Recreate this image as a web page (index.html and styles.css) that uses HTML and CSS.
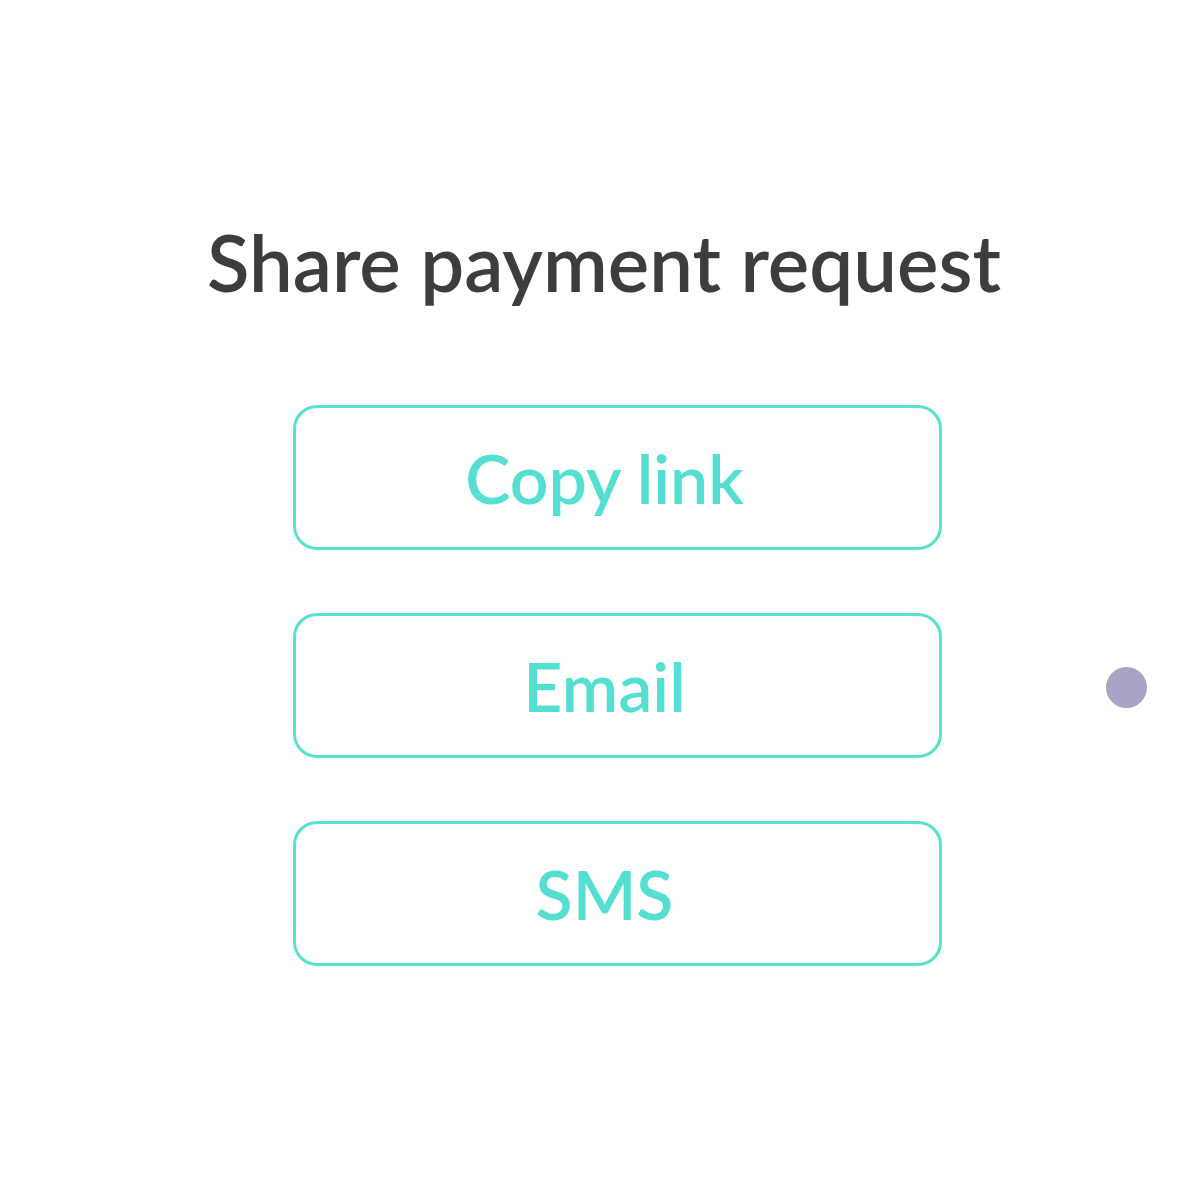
FILE: index.html
```html
<!DOCTYPE html>
<html>
<head>
<meta charset="utf-8">
<link rel="stylesheet" href="styles.css">
</head>
<body>
<main class="page">
  <h1 class="title">Share payment request</h1>
  <div class="options">
    <button class="option">Copy link</button>
    <button class="option">Email</button>
    <button class="option">SMS</button>
  </div>
  <span class="dot"></span>
</main>
</body>
</html>
```

FILE: styles.css
```css
html, body {
  margin: 0;
  padding: 0;
  background: #ffffff;
}
.page {
  position: relative;
  width: 1200px;
  height: 1200px;
  display: flex;
  flex-direction: column;
  align-items: flex-start;
  font-family: Lato, "Open Sans", sans-serif;
}
.title {
  align-self: stretch;
  text-align: center;
  margin: 214px 0 0 8px;
  font-size: 78px;
  line-height: 96px;
  font-weight: 600;
  color: #3d3d3d;
}
.options {
  margin: 95px 0 0 293px;
  display: flex;
  flex-direction: column;
  gap: 63px;
}
.option {
  width: 649px;
  height: 145px;
  box-sizing: border-box;
  border: 3px solid #5ae0d2;
  border-radius: 24px;
  background: #fff;
  color: #55dfd0;
  font-family: Lato, "Open Sans", sans-serif;
  font-size: 68px;
  font-weight: 600;
  padding: 0 26px 0 0;
}
.dot {
  position: absolute;
  left: 1106px;
  top: 667px;
  width: 41px;
  height: 41px;
  border-radius: 50%;
  background: #a9a3c4;
}
```
